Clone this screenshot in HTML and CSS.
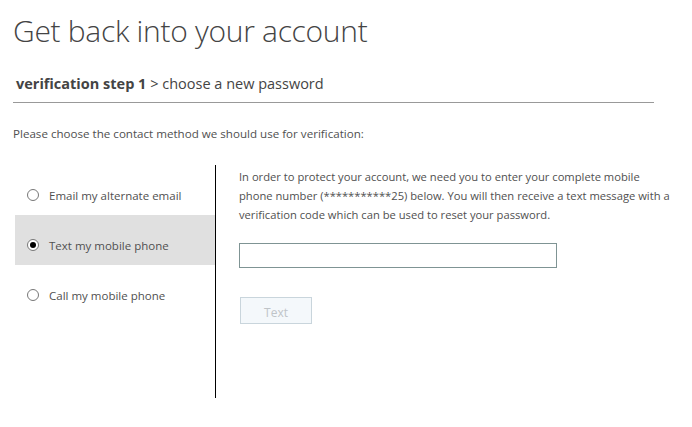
FILE: index.html
```html
<!DOCTYPE html>
<html>
<head>
<meta charset="utf-8">
<link rel="stylesheet" href="styles.css">
</head>
<body>
<div class="page">
  <h1 class="title">Get back into your account</h1>
  <div class="steps"><span class="step-current">verification step 1</span> &gt; choose a new password</div>
  <p class="intro">Please choose the contact method we should use for verification:</p>
  <div class="panel">
    <div class="options">
      <div class="option"><span class="radio"></span><span class="label">Email my alternate email</span></div>
      <div class="option selected"><span class="radio checked"></span><span class="label">Text my mobile phone</span></div>
      <div class="option"><span class="radio"></span><span class="label">Call my mobile phone</span></div>
    </div>
    <div class="detail">
      <p class="desc">In order to protect your account, we need you to enter your complete mobile phone number (***********25) below. You will then receive a text message with a verification code which can be used to reset your password.</p>
      <input class="phone" type="text">
      <button class="send" disabled>Text</button>
    </div>
  </div>
</div>
</body>
</html>
```
FILE: styles.css
```css
html, body {
  margin: 0;
  padding: 0;
  background: #fff;
}
.page {
  font-family: "Open Sans", "Noto Sans", sans-serif;
  color: #505050;
  padding: 0 0 0 13px;
  width: 679px;
}
.title {
  margin: 0;
  padding-top: 11px;
  font-size: 30px;
  font-weight: 300;
  line-height: 40px;
  color: #444;
  letter-spacing: -0.3px;
}
.steps {
  margin-top: 23px;
  width: 638px;
  padding-left: 3px;
  font-size: 14.5px;
  line-height: 20px;
  color: #444;
  padding-bottom: 8px;
  border-bottom: 1px solid #999;
}
.step-current {
  font-weight: 700;
}
.intro {
  margin: 23px 0 0 0;
  font-size: 11.6px;
  line-height: 16px;
  color: #505050;
}
.panel {
  display: flex;
  margin-top: 23px;
}
.options {
  width: 200px;
  margin-left: 2px;
  height: 233px;
  border-right: 1px solid #000;
}
.option {
  display: flex;
  align-items: center;
  height: 50px;
  box-sizing: border-box;
  padding: 12px 0 0 12px;
  font-size: 11.5px;
  line-height: 14px;
  color: #505050;
}
.option.selected {
  background: #e0e0e0;
}
.radio {
  width: 12px;
  height: 12px;
  border: 1px solid #777;
  border-radius: 50%;
  background: #fff;
  box-sizing: border-box;
  position: relative;
  margin-right: 10px;
  margin-top: -2px;
  flex: none;
}
.radio.checked::after {
  content: "";
  position: absolute;
  left: 2px;
  top: 2px;
  width: 6px;
  height: 6px;
  border-radius: 50%;
  background: #000;
}
.detail {
  padding-left: 23px;
  padding-top: 2px;
  width: 436px;
}
.desc {
  margin: 0;
  font-size: 11.2px;
  line-height: 19px;
  color: #505050;
}
.phone {
  display: block;
  margin-top: 19px;
  width: 318px;
  height: 25px;
  box-sizing: border-box;
  border: 1px solid #7f9494;
  padding: 0;
  background: #fff;
}
.send {
  display: block;
  margin-top: 29px;
  margin-left: 1px;
  width: 72px;
  height: 27px;
  border: 1px solid #c9d5dc;
  background: #f4f8fb;
  color: #bfc4c8;
  font-family: "Open Sans", "Noto Sans", sans-serif;
  font-size: 12px;
  padding: 3px 0 0 0;
}
```
